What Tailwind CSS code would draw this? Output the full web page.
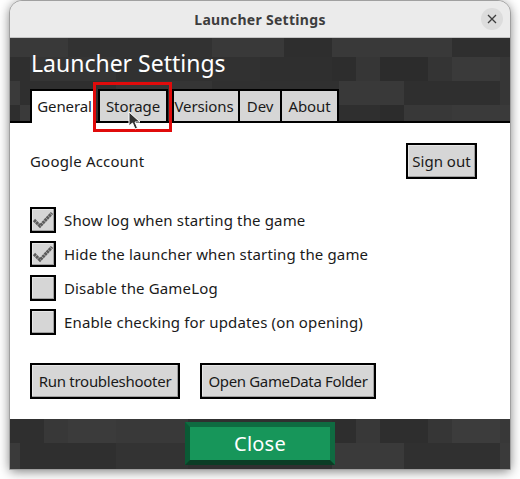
<!DOCTYPE html>
<html lang="en">
  <head>
    <meta charset="UTF-8" />
    <title>Launcher Settings</title>
    <script src="https://cdn.jsdelivr.net/npm/@tailwindcss/browser@4"></script>
  </head>
  <body class="bg-white h-[479px] w-[520px] overflow-hidden font-['Noto_Sans',sans-serif] text-[#1a1a1a]">
    <div class="relative w-[500px] h-[468px] ml-[10px] mt-[1px] flex flex-col rounded-t-[12px] bg-white shadow-[0_2px_12px_rgba(0,0,0,0.55)] outline outline-[#a0a0a0]">
      <div class="h-[37px] shrink-0 flex items-center justify-center relative rounded-t-[12px] bg-[#ebebeb] border-b border-[#c4c4c4]">
        <span class="text-[14px] font-bold text-[#3d3d3d] tracking-[0.3px]">Launcher Settings</span>
        <button class="absolute right-[7px] top-[7px] w-[22px] h-[22px] rounded-full bg-[#dcdcdc] flex items-center justify-center">
          <svg width="10" height="10" viewBox="0 0 10 10"><path d="M1 1 9 9M9 1 1 9" stroke="#3d3d3d" stroke-width="1.3" /></svg>
        </button>
      </div>

      <div class="relative h-[85px] shrink-0 bg-[#303030] border-b-2 border-black">
        <svg id="head-blocks" class="absolute inset-0" width="500" height="83"></svg>
        <div class="relative h-[51px] pl-[21px] pt-[7px] text-[23px] leading-[36px] text-white">Launcher Settings</div>
        <div class="relative flex pl-[20px] text-[15px] leading-[30px] h-[32px] tracking-[-0.1px]">
          <div class="h-[34px] w-[66px] pl-[3px] bg-white border-2 border-b-0 border-black text-center">General</div>
          <div class="h-[32px] w-[70px] ml-[2px] bg-[#d6d6d6] border-2 border-b-0 border-black text-center">Storage</div>
          <div class="h-[32px] w-[68px] ml-[4px] pr-[4px] bg-[#d6d6d6] border-2 border-b-0 border-black text-center">Versions</div>
          <div class="h-[32px] w-[42px] bg-[#d6d6d6] border-2 border-l-0 border-b-0 border-black text-center">Dev</div>
          <div class="h-[32px] w-[57px] bg-[#d6d6d6] border-2 border-l-0 border-b-0 border-black text-center">About</div>
        </div>
      </div>

      <div class="flex-1 flex flex-col px-[20px] text-[15px]">
        <div class="flex items-center justify-between mt-[20px] pr-[13px] h-[36px]">
          <span class="tracking-[0.2px]">Google Account</span>
          <button class="w-[71px] h-[36px] bg-[#d6d6d6] border-2 border-black shadow-[inset_-1px_-1px_0_#a0a0a0,inset_1px_1px_0_#e6e6e6]">Sign out</button>
        </div>

        <div class="mt-[28px] flex flex-col gap-[8px] tracking-[0.15px]">
          <label class="flex items-center gap-[8px] h-[26px]">
            <span class="w-[26px] h-[26px] bg-[#d6d6d6] border-2 border-black shadow-[inset_-1px_-1px_0_#a0a0a0,inset_1px_1px_0_#e6e6e6]">
              <svg width="22" height="22" viewBox="0 0 22 22"><path d="M2 11 8 17 20 4" fill="none" stroke="#5c5c5c" stroke-width="3.2" stroke-dasharray="2.6 .5" /></svg>
            </span>
            Show log when starting the game
          </label>
          <label class="flex items-center gap-[8px] h-[26px]">
            <span class="w-[26px] h-[26px] bg-[#d6d6d6] border-2 border-black shadow-[inset_-1px_-1px_0_#a0a0a0,inset_1px_1px_0_#e6e6e6]">
              <svg width="22" height="22" viewBox="0 0 22 22"><path d="M2 11 8 17 20 4" fill="none" stroke="#5c5c5c" stroke-width="3.2" stroke-dasharray="2.6 .5" /></svg>
            </span>
            Hide the launcher when starting the game
          </label>
          <label class="flex items-center gap-[8px] h-[26px]">
            <span class="w-[26px] h-[26px] bg-[#d6d6d6] border-2 border-black shadow-[inset_-1px_-1px_0_#a0a0a0,inset_1px_1px_0_#e6e6e6]"></span>
            Disable the GameLog
          </label>
          <label class="flex items-center gap-[8px] h-[26px]">
            <span class="w-[26px] h-[26px] bg-[#d6d6d6] border-2 border-black shadow-[inset_-1px_-1px_0_#a0a0a0,inset_1px_1px_0_#e6e6e6]"></span>
            Enable checking for updates (on opening)
          </label>
        </div>

        <div class="mt-[28px] flex gap-[20px]">
          <button class="w-[150px] h-[36px] bg-[#d6d6d6] border-2 border-black tracking-[-0.28px] shadow-[inset_-1px_-1px_0_#a0a0a0,inset_1px_1px_0_#e6e6e6]">Run troubleshooter</button>
          <button class="w-[176px] h-[36px] bg-[#d6d6d6] border-2 border-black tracking-[-0.35px] shadow-[inset_-1px_-1px_0_#a0a0a0,inset_1px_1px_0_#e6e6e6]">Open GameData Folder</button>
        </div>
      </div>

      <div class="relative h-[50px] shrink-0 bg-[#303030] flex justify-center pt-[3px]">
        <svg id="foot-blocks" class="absolute inset-0" width="500" height="50"></svg>
        <button class="relative w-[150px] h-[43px] bg-[#17965a] border-[5px] border-t-[#0f6b41] border-r-[#0f6b41] border-b-[#0b3d25] border-l-[#0a5a35] text-white text-[20px] tracking-[0.2px]">Close</button>
      </div>
    </div>

    <!-- red highlight and pointer sit over the tabs -->
    <div class="absolute left-[93px] top-[82px] w-[79px] h-[50px] border-[3px] border-[#e00b0b]"></div>
    <svg class="absolute left-[127px] top-[111px]" width="16" height="20" viewBox="0 0 16 20">
      <path d="M2 1v14l3.5-3 2.5 6 2.5-1-2.5-6h5z" fill="#333" stroke="#fff" stroke-width="1" />
    </svg>

    <script>
      // [x0, x1, y0, y1, colour] in page pixels, window starts at 10,38
      const headBlocks = [
        [10, 68, 38, 57, "#393939"], [68, 212, 38, 57, "#323232"], [212, 284, 38, 57, "#393939"],
        [284, 332, 38, 57, "#2e2e2e"], [332, 452, 38, 57, "#393939"], [452, 510, 38, 57, "#2f2f2f"],
        [10, 30, 57, 81, "#2f2f2f"], [30, 116, 57, 81, "#353535"], [116, 260, 57, 81, "#313131"],
        [260, 332, 57, 81, "#2f2f2f"], [332, 356, 57, 81, "#2d2d2d"], [356, 380, 57, 81, "#363636"],
        [380, 428, 57, 81, "#2c2c2c"], [428, 452, 57, 81, "#343434"], [452, 500, 57, 81, "#3a3a3a"], [500, 510, 57, 81, "#363636"],
        [10, 20, 81, 105, "#3a3a3a"], [20, 30, 81, 105, "#2f2f2f"], [30, 116, 81, 89, "#2f2f2f"], [116, 212, 81, 89, "#353535"],
        [212, 339, 81, 89, "#303030"], [339, 404, 81, 105, "#393939"], [404, 500, 81, 105, "#2f2f2f"], [500, 510, 81, 105, "#363636"],
        [10, 20, 105, 122, "#2e2e2e"], [20, 30, 105, 122, "#3a3a3a"], [339, 380, 105, 122, "#2f2f2f"], [380, 404, 105, 122, "#2c2c2c"],
        [404, 452, 105, 122, "#383838"], [452, 510, 105, 122, "#3a3a3a"],
      ];
      const footBlocks = [
        [10, 44, 419, 443, "#2f2f2f"], [44, 68, 419, 443, "#383838"], [68, 116, 419, 443, "#3b3b3b"], [116, 188, 419, 443, "#393939"],
        [332, 356, 419, 443, "#2e2e2e"], [356, 380, 419, 443, "#383838"], [380, 428, 419, 443, "#2e2e2e"], [428, 452, 419, 443, "#363636"],
        [452, 500, 419, 443, "#3c3c3c"], [500, 510, 419, 443, "#383838"],
        [10, 20, 443, 469, "#3a3a3a"], [20, 116, 443, 469, "#2f2f2f"], [116, 188, 443, 469, "#333333"],
        [332, 404, 443, 469, "#3a3a3a"], [404, 500, 443, 469, "#303030"], [500, 510, 443, 469, "#3a3a3a"],
      ];

      function drawBlocks(id, blocks, top) {
        document.getElementById(id).innerHTML = blocks
          .map(([x0, x1, y0, y1, c]) => `<rect x="${x0 - 10}" y="${y0 - top}" width="${x1 - x0}" height="${y1 - y0}" fill="${c}" />`)
          .join("");
      }
      drawBlocks("head-blocks", headBlocks, 38);
      drawBlocks("foot-blocks", footBlocks, 419);
    </script>
  </body>
</html>
